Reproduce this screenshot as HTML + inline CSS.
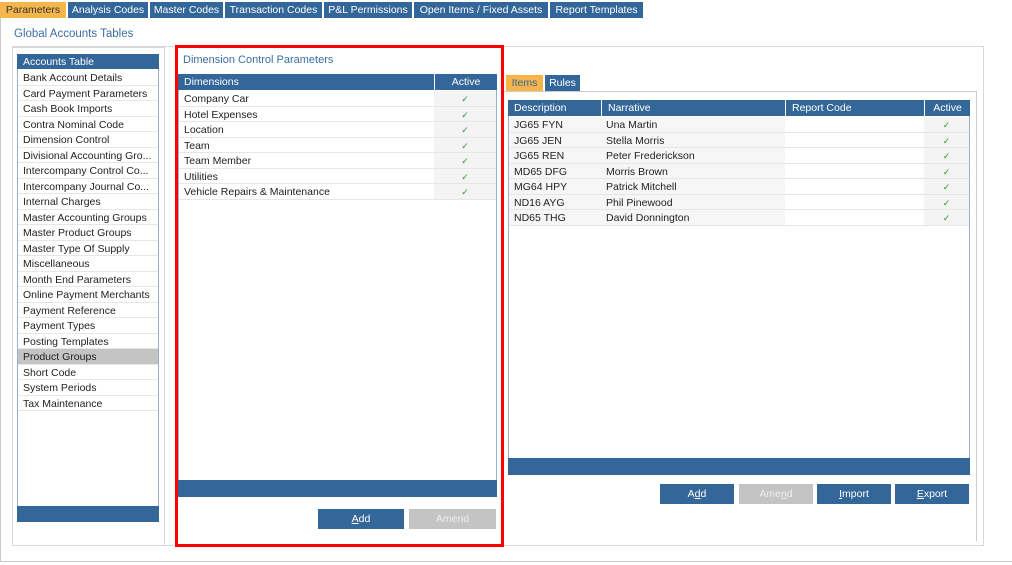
<!DOCTYPE html>
<html><head><meta charset="utf-8"><style>
*{box-sizing:border-box;margin:0;padding:0}
body{width:1012px;height:565px;background:#fff;font-family:"Liberation Sans",sans-serif;font-size:10.5px;color:#222;position:relative;overflow:hidden}
.a{position:absolute}
.tab{position:absolute;top:2px;height:16px;background:#336699;color:#fff;text-align:center;line-height:17px;font-size:10.5px;white-space:nowrap}
.blue{background:#336699;color:#fff}
.hd{position:absolute;height:16px;line-height:16px;color:#fff;padding-left:6px}
.row{position:absolute;height:15.5px;line-height:16px;border-bottom:1px solid #e6e6e6;white-space:nowrap;overflow:hidden}
.ck{color:#2a9a2a;text-align:center;font-size:9px}
.btn{position:absolute;height:20px;line-height:20px;text-align:center;color:#fff;background:#336699;font-size:10.5px}
.dis{background:#c4c4c4;color:#eee}
u{text-decoration:underline}
</style></head><body>
<div class="tab" style="left:0;width:66px;background:#f5b54a;color:#333">Parameters</div>
<div class="tab" style="left:68px;width:80px">Analysis Codes</div>
<div class="tab" style="left:150px;width:73px">Master Codes</div>
<div class="tab" style="left:225px;width:97px">Transaction Codes</div>
<div class="tab" style="left:324px;width:88px">P&amp;L Permissions</div>
<div class="tab" style="left:414px;width:134px">Open Items / Fixed Assets</div>
<div class="tab" style="left:550px;width:93px">Report Templates</div>
<div class="a" style="left:0;top:18px;width:1012px;height:544px;border-left:1px solid #ccc;border-bottom:1px solid #ccc"></div>
<div class="a" style="left:14px;top:28px;color:#3a6ea5;font-size:11.5px">Global Accounts Tables</div>
<div class="a" style="left:12px;top:46px;width:972px;height:500px;border:1px solid #d8d8d8"></div>
<div class="a" style="left:12px;top:47px;width:153px;height:499px;border:1px solid #d8d8d8;background:#fff"></div>
<div class="a" style="left:17px;top:54px;width:142px;height:468px;border:1px solid #9ab0cc;background:#fff"></div>
<div class="hd blue" style="left:17px;top:54px;width:142px;height:15px;line-height:16px">Accounts Table</div>
<div id="lst"></div>
<div class="a blue" style="left:17px;top:506px;width:142px;height:16px"></div>

<div class="a" style="left:175px;top:45px;width:329px;height:502px;border:3px solid #f00;background:#fff"></div>
<div class="a" style="left:183px;top:54px;color:#3a6ea5;font-size:11px">Dimension Control Parameters</div>
<div class="a" style="left:178px;top:74px;width:319px;height:423px;border:1px solid #9ab0cc"></div>
<div class="hd blue" style="left:178px;top:74px;width:256px">Dimensions</div>
<div class="hd blue" style="left:434px;top:74px;width:63px;text-align:center;padding:0;border-left:1px solid #fff">Active</div>
<div id="dim"></div>
<div class="a blue" style="left:178px;top:480px;width:319px;height:17px"></div>
<div class="btn" style="left:318px;top:509px;width:86px"><u>A</u>dd</div>
<div class="btn dis" style="left:409px;top:509px;width:87px">Amend</div>

<div class="tab" style="left:506px;top:75px;width:37px;background:#f5b54a;color:#336699">Items</div>
<div class="tab" style="left:545px;top:75px;width:35px">Rules</div>
<div class="a" style="left:504px;top:91px;width:473px;height:450px;border-top:1px solid #ccc;border-right:1px solid #ccc"></div>
<div class="a" style="left:508px;top:100px;width:462px;height:375px;border:1px solid #9ab0cc"></div>
<div class="hd blue" style="left:508px;top:100px;width:93px">Description</div>
<div class="hd blue" style="left:601px;top:100px;width:184px;border-left:1px solid #fff">Narrative</div>
<div class="hd blue" style="left:785px;top:100px;width:139px;border-left:1px solid #fff">Report Code</div>
<div class="hd blue" style="left:924px;top:100px;width:46px;text-align:center;padding:0;border-left:1px solid #fff">Active</div>
<div id="itm"></div>
<div class="a blue" style="left:508px;top:458px;width:462px;height:17px"></div>
<div class="btn" style="left:660px;top:484px;width:74px">A<u>d</u>d</div>
<div class="btn dis" style="left:739px;top:484px;width:74px">Ame<u>n</u>d</div>
<div class="btn" style="left:817px;top:484px;width:74px"><u>I</u>mport</div>
<div class="btn" style="left:895px;top:484px;width:74px"><u>E</u>xport</div>
<script>
var L=["Bank Account Details","Card Payment Parameters","Cash Book Imports","Contra Nominal Code","Dimension Control","Divisional Accounting Gro...","Intercompany Control Co...","Intercompany Journal Co...","Internal Charges","Master Accounting Groups","Master Product Groups","Master Type Of Supply","Miscellaneous","Month End Parameters","Online Payment Merchants","Payment Reference","Payment Types","Posting Templates","Product Groups","Short Code","System Periods","Tax Maintenance"];
var h="";L.forEach(function(t,i){h+='<div class="row" style="left:18px;top:'+(70+i*15.5)+'px;width:140px;padding-left:5px;'+(t=="Product Groups"?'background:#c4c4c4;':'')+'">'+t+'</div>'});
document.getElementById("lst").innerHTML=h;
var D=["Company Car","Hotel Expenses","Location","Team","Team Member","Utilities","Vehicle Repairs &amp; Maintenance"];h="";
D.forEach(function(t,i){var y=91+i*15.5;h+='<div class="row" style="left:179px;top:'+y+'px;width:255px;padding-left:5px">'+t+'</div><div class="row ck" style="left:434px;top:'+y+'px;width:62px;background:#f4f4f4">&#10003;</div>'});
document.getElementById("dim").innerHTML=h;
var I=[["JG65 FYN","Una Martin"],["JG65 JEN","Stella Morris"],["JG65 REN","Peter Frederickson"],["MD65 DFG","Morris Brown"],["MG64 HPY","Patrick Mitchell"],["ND16 AYG","Phil Pinewood"],["ND65 THG","David Donnington"]];h="";
I.forEach(function(r,i){var y=117+i*15.5;h+='<div class="row" style="left:509px;top:'+y+'px;width:92px;padding-left:5px;background:#f6f6f6">'+r[0]+'</div><div class="row" style="left:601px;top:'+y+'px;width:184px;padding-left:5px;background:#f6f6f6">'+r[1]+'</div><div class="row" style="left:785px;top:'+y+'px;width:139px"></div><div class="row ck" style="left:924px;top:'+y+'px;width:45px;background:#f4f4f4">&#10003;</div>'});
document.getElementById("itm").innerHTML=h;
</script>
</body></html>
